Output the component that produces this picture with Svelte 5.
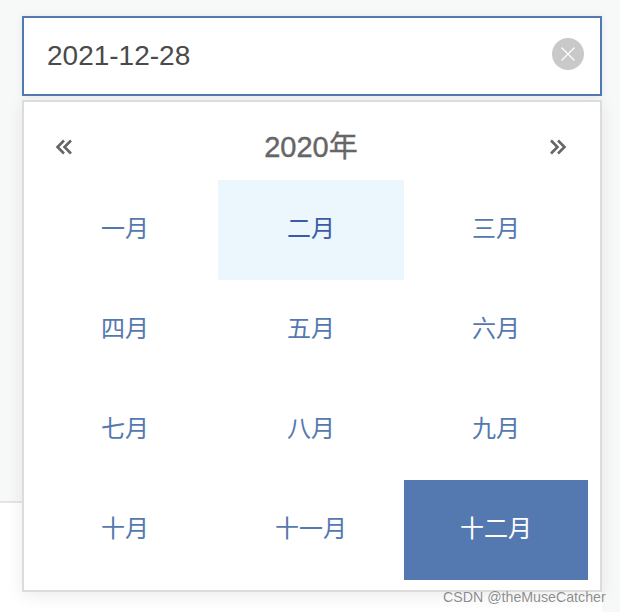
<script>
  const months = ['一月', '二月', '三月', '四月', '五月', '六月', '七月', '八月', '九月', '十月', '十一月', '十二月'];
  const hovered = '二月';
  const selected = '十二月';
</script>

<div class="page">
  <div class="lower"></div>

  <div class="picker">
    <div class="input">
      <span class="value">2021-12-28</span>
      <button class="clear" aria-label="清除">
        <svg width="14" height="14" viewBox="0 0 14 14">
          <path d="M0.5 0.5 L13.5 13.5 M13.5 0.5 L0.5 13.5" stroke="#fff" stroke-width="1.2" fill="none" />
        </svg>
      </button>
    </div>

    <div class="panel">
      <div class="header">
        <svg class="arrow" width="18" height="16" viewBox="0 0 18 16" aria-label="上一年">
          <path d="M9 1.5 L2.5 8 L9 14.5 M16 1.5 L9.5 8 L16 14.5" />
        </svg>
        <span class="title">2020年</span>
        <svg class="arrow" width="18" height="16" viewBox="0 0 18 16" aria-label="下一年">
          <path d="M2 1.5 L8.5 8 L2 14.5 M9 1.5 L15.5 8 L9 14.5" />
        </svg>
      </div>
      <div class="months">
        {#each months as m}
          <div class="month" class:hovered={m === hovered} class:selected={m === selected}>{m}</div>
        {/each}
      </div>
    </div>
  </div>

  <span class="watermark">CSDN @theMuseCatcher</span>
</div>

<style>
  :global(body) {
    margin: 0;
    background: #f7f8f8;
  }

  .page {
    position: relative;
    width: 620px;
    height: 612px;
    overflow: hidden;
    box-sizing: border-box;
    padding: 16px 18px 0 22px;
    background: #f7f8f8;
    font-family: "Liberation Sans", "Noto Sans CJK SC", sans-serif;
  }

  /* white part of the page behind the dropdown */
  .lower {
    position: absolute;
    left: 0;
    top: 501px;
    width: 602px;
    height: 111px;
    background: #fff;
    border-top: 2px solid #e4e5e6;
  }

  .picker {
    position: relative;
    display: flex;
    flex-direction: column;
    gap: 4px;
  }

  .input {
    height: 80px;
    box-sizing: border-box;
    border: 2px solid #5478b0;
    background: #fff;
    box-shadow: 0 0 6px rgba(84, 120, 176, 0.12);
    display: flex;
    align-items: center;
    justify-content: space-between;
    padding: 0 16px 0 23px;
  }

  .value {
    font-size: 28px;
    color: #4a4a4a;
  }

  .clear {
    width: 32px;
    height: 32px;
    margin-bottom: 4px;
    border: none;
    border-radius: 50%;
    padding: 0;
    background: #c9c9c9;
    display: flex;
    align-items: center;
    justify-content: center;
  }

  .panel {
    height: 492px;
    box-sizing: border-box;
    border: 2px solid #dcdcdc;
    background: #fff;
    box-shadow: 0 4px 16px rgba(0, 0, 0, 0.08);
    padding: 0 12px 10px 8px;
    display: flex;
    flex-direction: column;
  }

  .header {
    height: 78px;
    box-sizing: border-box;
    padding: 12px 21px 0 23px;
    display: flex;
    align-items: center;
    justify-content: space-between;
    color: #666;
  }

  .title {
    font-size: 29px;
    margin-bottom: 6px;
    -webkit-text-stroke: 0.4px #666;
  }

  .arrow {
    margin-bottom: 1px;
  }

  .arrow path {
    fill: none;
    stroke: #666;
    stroke-width: 2.6;
  }

  .months {
    flex: 1;
    display: grid;
    grid-template-columns: 186px 186px 184px;
    grid-template-rows: repeat(4, 100px);
  }

  .month {
    display: flex;
    align-items: center;
    justify-content: center;
    box-sizing: border-box;
    padding-bottom: 8px;
    font-size: 24px;
    color: #5478b0;
  }

  .month.hovered {
    background: #ebf7fd;
    color: #3c5aa6;
  }

  .month.selected {
    background: #5478b0;
    color: #fff;
  }

  .watermark {
    position: absolute;
    left: 443px;
    top: 589px;
    font-size: 14.2px;
    color: rgba(90, 90, 90, 0.7);
    text-shadow: 0 0 1px rgba(255, 255, 255, 0.8);
  }
</style>
